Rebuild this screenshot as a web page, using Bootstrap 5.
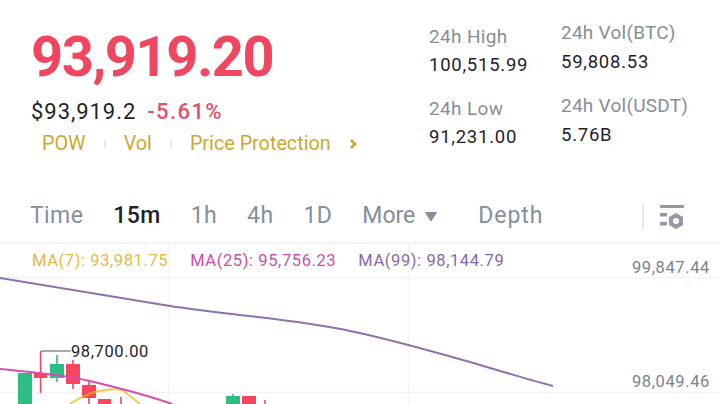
<!DOCTYPE html>
<html lang="en">
<head>
<meta charset="utf-8">
<title>Ticker</title>
<link href="https://cdn.jsdelivr.net/npm/bootstrap@5.3.0/dist/css/bootstrap.min.css" rel="stylesheet">
<style>
html,body{width:720px;height:404px;overflow:hidden;background:#fff}
body{font-family:"Roboto","Liberation Sans",sans-serif;color:#1e2329}
.head-zone{height:193px;padding:0 0 0 31px}
.price-col{width:398px}
.big-price{font-family:"Roboto",sans-serif;font-size:56px;font-weight:700;color:#f0465f;line-height:64px;letter-spacing:-1.4px;margin-top:25px;height:64px}
.sub-price{font-size:22px;line-height:28px;margin-top:9px;letter-spacing:.95px}
.sub-pct{color:#e2506a;margin-left:11px;letter-spacing:1.4px;font-weight:500}
.tag-row{font-size:19.8px;line-height:26px;color:#cfa72f;margin-top:5px;padding-left:11px}
.tag-sep{width:2px;height:8px;background:#e6e8ea;margin:0 18px}
.tag-chev{margin-left:18px}
.stat-col{margin-top:24px}
.stat-col-a{width:132px}
.stat-lab{font-size:19px;line-height:26px;color:#868e98;letter-spacing:.35px}
.stat-val{font-size:18.5px;line-height:26px;margin-top:2px;color:#1e2329;letter-spacing:.75px}
.stat-gap{height:18px}
.col-up{margin-top:20px}
.col-up .stat-lab{letter-spacing:.25px}
.col-up .stat-val{margin-top:3px}
.tab-bar{height:51px;padding:0 0 2px 30px;font-size:23px;color:#848e9c;border-bottom:2px solid #f2f3f4}
.tab-item{margin-right:30px;letter-spacing:.4px}
.tab-on{color:#1e2329;font-weight:500}
.tab-tri{margin-left:9px}
.tab-depth{margin-left:40px;letter-spacing:.9px}
.tab-line{width:2px;height:25px;background:#e6e8ea;margin-left:auto}
.tab-cfg{margin:0 36px 0 16px}
.chart-zone{height:160px;position:relative}
.chart-svg{display:block}
.ma-row{position:absolute;top:6px;left:32px;font-size:16.5px;line-height:22px;letter-spacing:.6px}
.ma-y{color:#e6b93f}.ma-p{color:#c94fa6;margin-left:22px}.ma-v{color:#8a68a8;margin-left:22px}
.axis-t{font-family:"Roboto",sans-serif;font-size:16.5px;fill:#7b838c;letter-spacing:.6px}
.hi-t{font-family:"Roboto",sans-serif;font-size:16.5px;fill:#1e2329;letter-spacing:.6px}
</style>
</head>
<body>
<div class="head-zone d-flex">
  <div class="price-col">
    <div class="big-price">93,919.20</div>
    <div class="sub-price">$93,919.2<span class="sub-pct">-5.61%</span></div>
    <div class="tag-row d-flex align-items-center">
      <span>POW</span><span class="tag-sep"></span><span>Vol</span><span class="tag-sep"></span><span>Price Protection</span>
      <svg class="tag-chev" width="9" height="12" viewBox="0 0 9 12"><path d="M2 2l4 4-4 4" fill="none" stroke="#cfa72f" stroke-width="2.8"/></svg>
    </div>
  </div>
  <div class="stat-col stat-col-a">
    <div class="stat-lab">24h High</div>
    <div class="stat-val">100,515.99</div>
    <div class="stat-gap"></div>
    <div class="stat-lab">24h Low</div>
    <div class="stat-val">91,231.00</div>
  </div>
  <div class="stat-col col-up">
    <div class="stat-lab">24h Vol(BTC)</div>
    <div class="stat-val">59,808.53</div>
    <div class="stat-gap"></div>
    <div class="stat-lab">24h Vol(USDT)</div>
    <div class="stat-val">5.76B</div>
  </div>
</div>
<div class="tab-bar d-flex align-items-center">
  <span class="tab-item">Time</span>
  <span class="tab-item tab-on">15m</span>
  <span class="tab-item">1h</span>
  <span class="tab-item">4h</span>
  <span class="tab-item">1D</span>
  <span>More</span>
  <svg class="tab-tri" width="14" height="10" viewBox="0 0 14 10"><path d="M1.500 .5h11l-5.500 8.500z" fill="#848e9c" stroke="#848e9c" stroke-linejoin="round"/></svg>
  <span class="tab-depth">Depth</span>
  <span class="tab-line"></span>
  <svg class="tab-cfg" width="24" height="24" viewBox="0 0 24 24">
    <path d="M0 0h24v3H0zM0 8h7v3.500H0zM0 17h7v3.500H0z" fill="#929aa5"/>
    <path d="M16 8l7 4v8l-7 4-7-4v-8z" fill="#929aa5"/>
    <circle cx="16" cy="16" r="3" fill="#fff"/>
  </svg>
</div>
<div class="chart-zone">
  <svg class="chart-svg" width="720" height="160" viewBox="0 244 720 160">
    <path d="M0 277.500H720M0 392.500H720M168.500 244V404M408.500 244V404" stroke="#f2f3f4" stroke-width="1.500" fill="none"/>
    <path d="M0 278C40 285 100 295 170 306C230 315 300 320 350 331C390 339 430 351 470 362C500 371 530 380 553 386" stroke="#9170ad" stroke-width="2" fill="none"/>
    <path d="M41 351H71" stroke="#848e9c" stroke-width="1.500" fill="none"/>
    <g fill="#2ebd85"><rect x="18" y="373" width="14" height="31"/><rect x="50" y="364" width="14" height="14"/><rect x="56.200" y="355" width="1.600" height="27"/><rect x="226" y="396" width="14" height="8"/><rect x="232" y="394" width="1.500" height="3"/></g>
    <g fill="#f6465d"><rect x="34" y="373" width="13" height="5"/><rect x="39.800" y="351" width="1.600" height="42"/><rect x="66" y="364" width="14" height="20"/><rect x="72.200" y="360" width="1.600" height="29"/><rect x="82" y="385" width="14" height="13"/><rect x="88.200" y="380" width="1.600" height="24"/><rect x="98" y="399" width="13" height="5"/><rect x="120.200" y="397" width="1.600" height="7"/><rect x="242" y="396" width="14" height="8"/><rect x="264.200" y="400" width="1.600" height="4"/></g>
    <path d="M70 404C82 396 95 391 105 390C112 389 118 389 122 390C128 394 134 399 140 404" stroke="#f0b90b" stroke-opacity=".75" stroke-width="2" fill="none"/>
    <path d="M0 369C30 372 60 374 90 381C115 387 145 394 172 404" stroke="#d44fb0" stroke-width="2" fill="none"/>
    <text class="hi-t" x="71" y="357">98,700.00</text>
    <text class="axis-t" x="632" y="273">99,847.44</text>
    <text class="axis-t" x="632" y="387">98,049.46</text>
  </svg>
  <div class="ma-row d-flex"><span class="ma-y">MA(7): 93,981.75</span><span class="ma-p">MA(25): 95,756.23</span><span class="ma-v">MA(99): 98,144.79</span></div>
</div>
<script src="https://cdn.jsdelivr.net/npm/bootstrap@5.3.0/dist/js/bootstrap.bundle.min.js"></script>
</body>
</html>
